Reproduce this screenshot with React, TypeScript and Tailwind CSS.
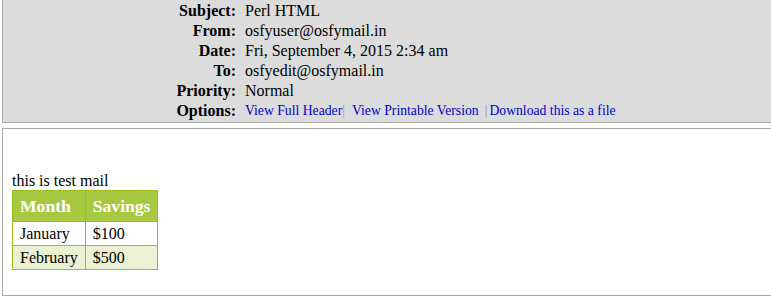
const rows: [string, string][] = [
  ['Subject:', 'Perl HTML'],
  ['From:', 'osfyuser@osfymail.in'],
  ['Date:', 'Fri, September 4, 2015 2:34 am'],
  ['To:', 'osfyedit@osfymail.in'],
  ['Priority:', 'Normal'],
];

const savings = [
  { month: 'January', amount: '$100' },
  { month: 'February', amount: '$500' },
];

const App = () => {
  return (
    <div className="w-[771px] h-[297px] overflow-hidden bg-white text-black font-['Liberation_Serif',serif] text-[16px]">
      {/* header box */}
      <div className="ml-[2px] w-[780px] h-[123px] bg-[#dcdcdc] border-l border-b border-[#aaaaaa] pt-[1px]">
        {rows.map(([label, value]) => (
          <div key={label} className="flex h-[20px] leading-[20px]">
            <div className="w-[233px] text-right font-bold">{label}</div>
            <div className="pl-[9px]">{value}</div>
          </div>
        ))}
        <div className="flex h-[20px] leading-[20px]">
          <div className="w-[233px] text-right font-bold">Options:</div>
          <div className="pl-[9px] text-[13.7px] text-[#0000cc]">
            <span>View Full Header</span>
            <span className="text-[#999999]">|</span>
            <span className="ml-[7px]">View Printable Version</span>
            <span className="ml-[6px] text-[#999999]">|</span>
            <span className="ml-[2px]">Download this as a file</span>
          </div>
        </div>
      </div>

      {/* message body */}
      <div className="ml-[2px] mt-[5px] w-[780px] h-[168px] border-l border-t border-b border-[#aaaaaa] pl-[9px] pt-[43px]">
        <div className="leading-[18px]">this is test mail</div>
        <table className="border-collapse">
          <thead>
            <tr>
              <th className="border border-[#98bf21] bg-[#a7c942] text-white text-left font-bold text-[17.6px] leading-[21px] px-[7px] pt-[5px] pb-[4px]">
                Month
              </th>
              <th className="border border-[#98bf21] bg-[#a7c942] text-white text-left font-bold text-[17.6px] leading-[21px] px-[7px] pt-[5px] pb-[4px]">
                Savings
              </th>
            </tr>
          </thead>
          <tbody>
            {savings.map((row, i) => (
              <tr key={row.month} className={i % 2 === 1 ? 'bg-[#eaf2d3]' : 'bg-white'}>
                <td className="border border-[#98bf21] px-[7px] pt-[3px] pb-[2px] leading-[18px]">
                  {row.month}
                </td>
                <td className="border border-[#98bf21] px-[7px] pt-[3px] pb-[2px] leading-[18px]">
                  {row.amount}
                </td>
              </tr>
            ))}
          </tbody>
        </table>
      </div>
    </div>
  );
};

export default App;
